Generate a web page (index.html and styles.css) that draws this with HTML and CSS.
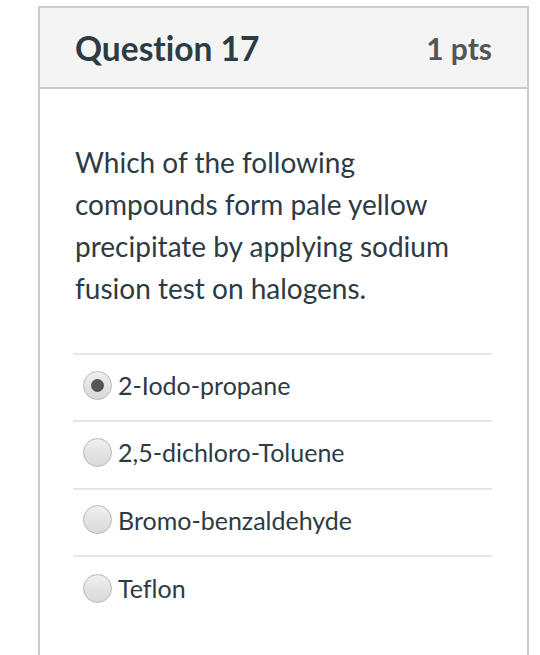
FILE: index.html
```html
<!DOCTYPE html>
<html>
<head>
<meta charset="utf-8">
<link rel="stylesheet" href="styles.css">
</head>
<body>
<div class="card">
  <div class="header">
    <h2 class="title">Question 17</h2>
    <div class="pts">1 pts</div>
  </div>
  <div class="body">
    <p class="question">Which of the following compounds form pale yellow precipitate by applying sodium fusion test on halogens.</p>
    <div class="answers">
      <div class="answer"><span class="radio checked"></span><span class="label">2-Iodo-propane</span></div>
      <div class="answer"><span class="radio"></span><span class="label">2,5-dichloro-Toluene</span></div>
      <div class="answer"><span class="radio"></span><span class="label">Bromo-benzaldehyde</span></div>
      <div class="answer"><span class="radio"></span><span class="label">Teflon</span></div>
    </div>
  </div>
</div>
</body>
</html>
```
FILE: styles.css
```css
html, body {
  margin: 0;
  padding: 0;
  background: #fff;
  height: 100%;
  overflow: hidden;
}
body {
  box-sizing: border-box;
  font-family: Lato, "Open Sans", sans-serif;
  font-variant-ligatures: none;
  color: #2d3b45;
  padding: 6px 11px 0 38px;
}
.card {
  border: 2px solid #c9cccf;
  border-bottom: none;
  height: 100%;
  box-sizing: border-box;
}
.header {
  background: #f4f4f4;
  border-bottom: 2px solid #c9cccf;
  height: 79px;
  display: flex;
  align-items: center;
  justify-content: space-between;
  padding: 0 35px 0 35px;
}
.title {
  margin: 0;
  font-size: 33.5px;
  font-weight: 700;
  color: #2d3b45;
}
.pts {
  font-size: 30px;
  font-weight: 700;
  color: #555;
}
.body {
  padding: 52px 35px 0 33px;
}
.question {
  margin: 0 0 44px 2px;
  font-size: 28px;
  line-height: 42px;
  color: #2d3b45;
}
.answers {
  border-top: 2px solid #e6e6e6;
}
.answer {
  display: flex;
  align-items: center;
  height: 67.3px;
  box-sizing: border-box;
  padding: 0 0 5px 10px;
  border-bottom: 2px solid #e6e6e6;
  gap: 6px;
}
.answer:last-child {
  border-bottom: none;
}
.radio {
  width: 27px;
  height: 27px;
  border-radius: 50%;
  border: 1px solid #b8b8b8;
  background: linear-gradient(#efefef, #d9d9d9);
  position: relative;
  flex: none;
}
.radio.checked::after {
  content: "";
  position: absolute;
  left: 7px;
  top: 7px;
  width: 13px;
  height: 13px;
  border-radius: 50%;
  background: #555;
}
.label {
  font-size: 25px;
  color: #2d3b45;
}
```
